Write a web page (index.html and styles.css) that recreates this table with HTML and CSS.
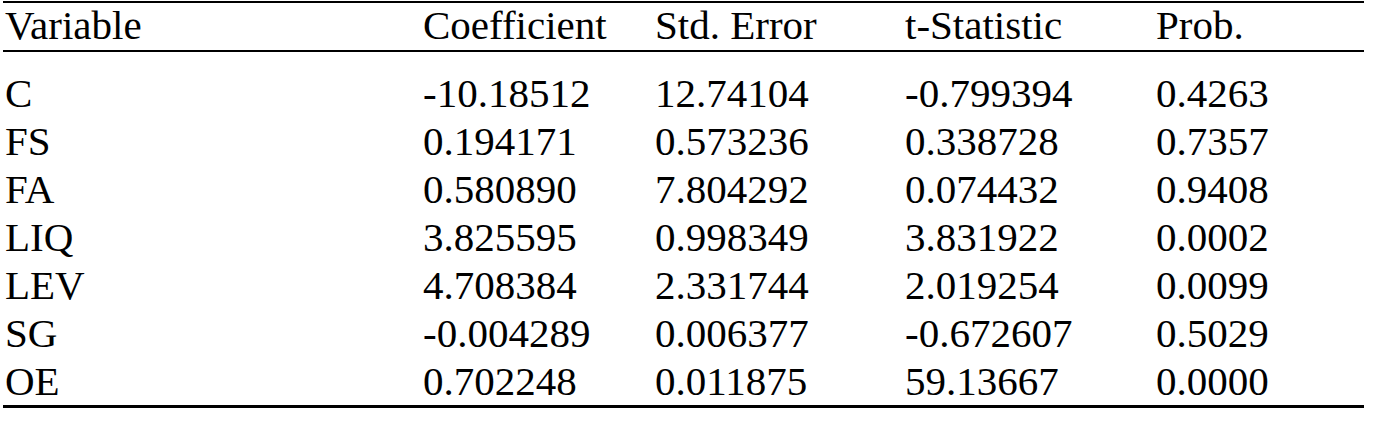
FILE: index.html
```html
<!DOCTYPE html>
<html lang="en">
<head>
    <meta charset="UTF-8">
    <meta name="viewport" content="width=device-width, initial-scale=1.0">
    <title>Regression Output</title>
    <link rel="stylesheet" href="styles.css">
</head>
<body>

    <table class="reg-table">
        <colgroup>
            <col class="c-var">
            <col class="c-coef">
            <col class="c-se">
            <col class="c-t">
            <col class="c-p">
        </colgroup>
        <thead>
            <tr>
                <th>Variable</th>
                <th>Coefficient</th>
                <th>Std. Error</th>
                <th>t-Statistic</th>
                <th>Prob.</th>
            </tr>
        </thead>
        <tbody>
            <tr class="first"><td>C</td><td>-10.18512</td><td>12.74104</td><td>-0.799394</td><td>0.4263</td></tr>
            <tr><td>FS</td><td>0.194171</td><td>0.573236</td><td>0.338728</td><td>0.7357</td></tr>
            <tr><td>FA</td><td>0.580890</td><td>7.804292</td><td>0.074432</td><td>0.9408</td></tr>
            <tr><td>LIQ</td><td>3.825595</td><td>0.998349</td><td>3.831922</td><td>0.0002</td></tr>
            <tr><td>LEV</td><td>4.708384</td><td>2.331744</td><td>2.019254</td><td>0.0099</td></tr>
            <tr><td>SG</td><td>-0.004289</td><td>0.006377</td><td>-0.672607</td><td>0.5029</td></tr>
            <tr><td>OE</td><td>0.702248</td><td>0.011875</td><td>59.13667</td><td>0.0000</td></tr>
        </tbody>
    </table>

</body>
</html>
```

FILE: styles.css
```css
* { margin: 0; padding: 0; box-sizing: border-box; }
body { background: #fff; color: #000; padding: 1px 0 0 3px; }

/* Regression table */
.reg-table {
    width: 1361px;
    table-layout: fixed;
    border-collapse: collapse;
    font-family: "Liberation Serif", "Times New Roman", serif;
    font-size: 41px;
    border-top: 2px solid #000;
    border-bottom: 3px solid #000;
}

.c-var { width: 418px; }
.c-coef { width: 232px; }
.c-se { width: 250px; }
.c-t { width: 251px; }

.reg-table th,
.reg-table td {
    text-align: left;
    font-weight: normal;
    white-space: nowrap;
    padding: 0 0 0 2px;
}

/* Header */
.reg-table th {
    line-height: 44px;
    padding-bottom: 3px;
    border-bottom: 2px solid #000;
}

/* Body rows */
.reg-table td { line-height: 48px; }
.reg-table tr.first td { padding-top: 17px; }
```
